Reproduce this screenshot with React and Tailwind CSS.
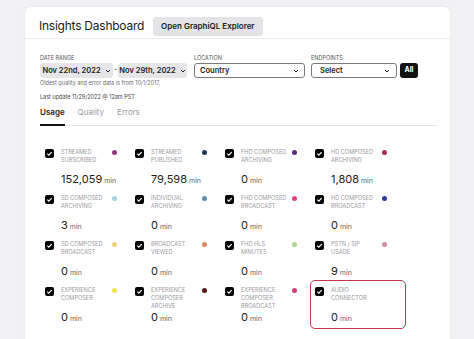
import React from 'react';

const metrics = [
  { label: ['Streamed', 'Subscribed'], value: '152,059', dot: 'bg-[#8e3b7e]' },
  { label: ['Streamed', 'Published'], value: '79,598', dot: 'bg-[#1f3556]' },
  { label: ['FHD Composed', 'Archiving'], value: '0', dot: 'bg-[#5b2a86]' },
  { label: ['HD Composed', 'Archiving'], value: '1,808', dot: 'bg-[#a32d52]' },
  { label: ['SD Composed', 'Archiving'], value: '3', dot: 'bg-[#a9cfdb]' },
  { label: ['Individual', 'Archiving'], value: '0', dot: 'bg-[#5e8ab4]' },
  { label: ['FHD Composed', 'Broadcast'], value: '0', dot: 'bg-[#e0457f]' },
  { label: ['HD Composed', 'Broadcast'], value: '0', dot: 'bg-[#2b3a9b]' },
  { label: ['SD Composed', 'Broadcast'], value: '0', dot: 'bg-[#e4d37c]' },
  { label: ['Broadcast', 'Viewed'], value: '0', dot: 'bg-[#d88a60]' },
  { label: ['FHD HLS', 'Minutes'], value: '0', dot: 'bg-[#a9d98b]' },
  { label: ['PSTN / SIP', 'Usage'], value: '9', dot: 'bg-[#d38aa6]' },
  { label: ['Experience', 'Composer'], value: '0', dot: 'bg-[#f1e24c]' },
  { label: ['Experience', 'Composer', 'Archive'], value: '0', dot: 'bg-[#5a1212]' },
  { label: ['Experience', 'Composer', 'Broadcast'], value: '0', dot: 'bg-[#d63b78]' },
  { label: ['Audio', 'Connector'], value: '0', dot: null, active: true },
];

const Chevron = () => (
  <svg width="6" height="4" viewBox="0 0 6 4" fill="none" stroke="currentColor" strokeWidth="1">
    <path d="M1 1l2 2 2-2" />
  </svg>
);

const Check = () => (
  <span className="w-[9px] h-[9px] mt-[1px] shrink-0 rounded-[2px] bg-black flex items-center justify-center">
    <svg width="7" height="7" viewBox="0 0 8 8" fill="none" stroke="white" strokeWidth="1.3">
      <path d="M1.5 4.2l1.7 1.7 3.3-3.6" />
    </svg>
  </span>
);

const MetricCell = ({ m }) => (
  <div
    className={`pl-[4px] pt-[5px] rounded-[5px] border ${
      m.active ? 'h-[49px] border-[#c9354d]' : 'h-[46px] border-transparent'
    }`}
  >
    <div className="flex items-start min-h-[24px]">
      <Check />
      <div className="ml-[7px] w-[47px] text-[5.6px] leading-[8px] uppercase whitespace-nowrap text-[#9a9a9e]">
        {m.label.map((line) => (
          <div key={line}>{line}</div>
        ))}
      </div>
      {m.dot && <span className={`ml-[4px] mt-[2px] w-[5px] h-[5px] rounded-full ${m.dot}`} />}
    </div>
    <div className="mt-[-2px] pl-[16px] h-[14px] leading-[14px] text-[#222]">
      <span className="text-[11px]">{m.value}</span>
      <span className="text-[7px] ml-[2px] text-[#666]">min</span>
    </div>
  </div>
);

const App = () => {
  return (
    <div className="w-[474px] h-[339px] overflow-hidden bg-[#f1f1f4] font-['Inter',sans-serif] text-[#1a1a1a]">
      <div className="flex h-full pt-[7px]">
        <div className="w-[25px] shrink-0" />
        <div className="w-[425px] shrink-0 bg-white rounded-t-[6px] shadow-[0_0_3px_rgba(0,0,0,0.06)]">
          <div className="h-[32px] px-[14px] pt-[7px] flex items-center border-b border-[#ececee]">
            <h1 className="text-[12px] font-normal tracking-[-0.02em] text-[#1a1a1a]">Insights Dashboard</h1>
            <button className="ml-[9px] h-[19px] px-[8px] rounded-[3px] bg-[#e4e4e7] text-[8px] font-semibold text-[#1a1a1a]">
              Open GraphiQL Explorer
            </button>
          </div>

          <div className="px-[15px] pt-[16px]">
            <div className="flex items-end">
              <div>
                <div className="text-[5.5px] leading-[7px] uppercase text-[#555] mb-[1px]">Date Range</div>
                <div className="flex items-center">
                  <button className="w-[73px] h-[15px] rounded-[3px] bg-[#e6e6e8] flex items-center justify-center gap-[4px] text-[7.5px] font-semibold text-[#222]">
                    Nov 22nd, 2022 <Chevron />
                  </button>
                  <span className="w-[5px] text-center text-[7px] text-[#444]">-</span>
                  <button className="w-[69px] h-[15px] rounded-[3px] bg-[#e6e6e8] flex items-center justify-center gap-[4px] text-[7.5px] font-semibold text-[#222]">
                    Nov 29th, 2022 <Chevron />
                  </button>
                </div>
              </div>
              <div className="ml-[7px]">
                <div className="text-[5.5px] leading-[7px] uppercase text-[#555] mb-[1px]">Location</div>
                <button className="w-[111px] h-[15px] rounded-[3px] border border-[#7a7a7a] flex items-center justify-between px-[5px] text-[7.5px] font-semibold text-[#222]">
                  Country <Chevron />
                </button>
              </div>
              <div className="ml-[6px]">
                <div className="text-[5.5px] leading-[7px] uppercase text-[#555] mb-[1px]">Endpoints</div>
                <button className="w-[86px] h-[15px] rounded-[3px] border border-[#7a7a7a] flex items-center justify-between pl-[8px] pr-[6px] text-[7.5px] font-semibold text-[#222]">
                  Select <Chevron />
                </button>
              </div>
              <button className="ml-[3px] w-[18px] h-[15px] rounded-[3px] bg-[#111] text-white text-[7px] font-bold">
                All
              </button>
            </div>

            <p className="mt-[1px] text-[5.5px] leading-[8px] text-[#6b6b70]">
              Oldest quality and error data is from 10/1/2017.
            </p>
            <p className="mt-[6px] text-[5.5px] leading-[8px] text-[#444]">Last update 11/29/2022 @ 12am PST</p>

            <div className="mt-[3px] mr-[-2px] flex gap-[13px] border-b border-[#e6e6e8] text-[8px]">
              <div className="pb-[6px] pt-[2px] border-b-2 border-[#111] mb-[-1px] font-semibold text-[#1a1a1a]">Usage</div>
              <div className="pt-[2px] text-[#9a9a9e]">Quality</div>
              <div className="pt-[2px] text-[#9a9a9e]">Errors</div>
            </div>

            <div className="mt-[16px] grid grid-cols-[90px_90px_90px_96px] auto-rows-[46px]">
              {metrics.map((m) => (
                <MetricCell key={m.label.join(' ')} m={m} />
              ))}
            </div>
          </div>
        </div>
        <div className="flex-1" />
      </div>
    </div>
  );
};

export default App;
